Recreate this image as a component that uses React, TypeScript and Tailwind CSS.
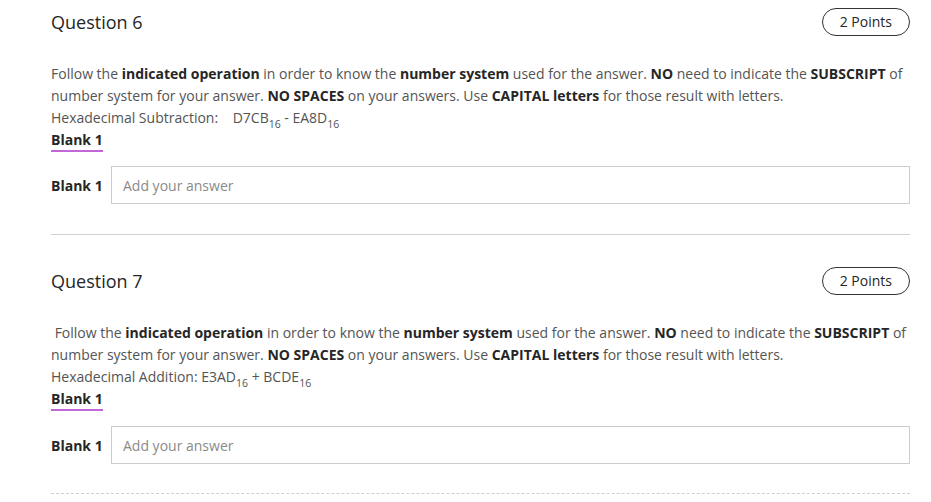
import React from 'react';

function Sub({ children }: { children: React.ReactNode }) {
  return <sub className="align-[-2px] text-[10.5px] leading-none">{children}</sub>;
}

function B({ children }: { children: React.ReactNode }) {
  return <strong className="font-bold text-[#262626]">{children}</strong>;
}

function Question({
  title,
  operation,
  lead,
  inputGap,
}: {
  title: string;
  operation: React.ReactNode;
  lead?: boolean;
  inputGap: string;
}) {
  return (
    <section>
      <div className="flex items-center justify-between pt-2">
        <h2 className="text-[18px] leading-[28px] text-[#262626]">{title}</h2>
        <span className="h-[28px] rounded-full border border-[#333] px-[17px] text-[14px] leading-[26px] text-[#262626]">
          2 Points
        </span>
      </div>
      <div className="mt-[27px] text-[14px] leading-[22px] text-[#545454]">
        <p>
          {lead && <span>&nbsp;</span>}
          Follow the <B>indicated operation</B> in order to know the <B>number system</B> used for the answer.{' '}
          <B>NO</B> need to indicate the <B>SUBSCRIPT</B> of number system for your answer. <B>NO SPACES</B> on your
          answers. Use <B>CAPITAL letters</B> for those result with letters.
        </p>
        <p>{operation}</p>
        <p>
          <span className="inline-block border-b-2 border-[#c366d8] font-bold leading-[20px] text-[#262626]">
            Blank 1
          </span>
        </p>
      </div>
      <div className={`${inputGap} flex items-center`}>
        <span className="w-[60px] text-[14px] font-bold text-[#262626]">Blank 1</span>
        <div className="flex h-[38px] flex-1 items-center border border-[#cdcdcd] px-[11px] text-[14px] text-[#8a8a8a]">
          Add your answer
        </div>
      </div>
    </section>
  );
}

export default function App() {
  return (
    <div
      className="min-h-screen bg-white pl-[51px] pr-[21px]"
      style={{ fontFamily: '"Open Sans", "Noto Sans", sans-serif' }}
    >
      <Question
        title="Question 6"
        inputGap="mt-[14px]"
        operation={
          <>
            Hexadecimal Subtraction:&nbsp;&nbsp;&nbsp; D7CB<Sub>16</Sub> - EA8D<Sub>16</Sub>
          </>
        }
      />
      <div className="mt-[30px] border-t border-[#cfcfcf]" />
      <div className="pt-[24px]">
        <Question
          title="Question 7"
          lead
          inputGap="mt-[15px]"
          operation={
            <>
              Hexadecimal Addition: E3AD<Sub>16</Sub> + BCDE<Sub>16</Sub>
            </>
          }
        />
      </div>
      <div className="mt-[29px] border-t border-dashed border-[#cfcfcf]" />
    </div>
  );
}
